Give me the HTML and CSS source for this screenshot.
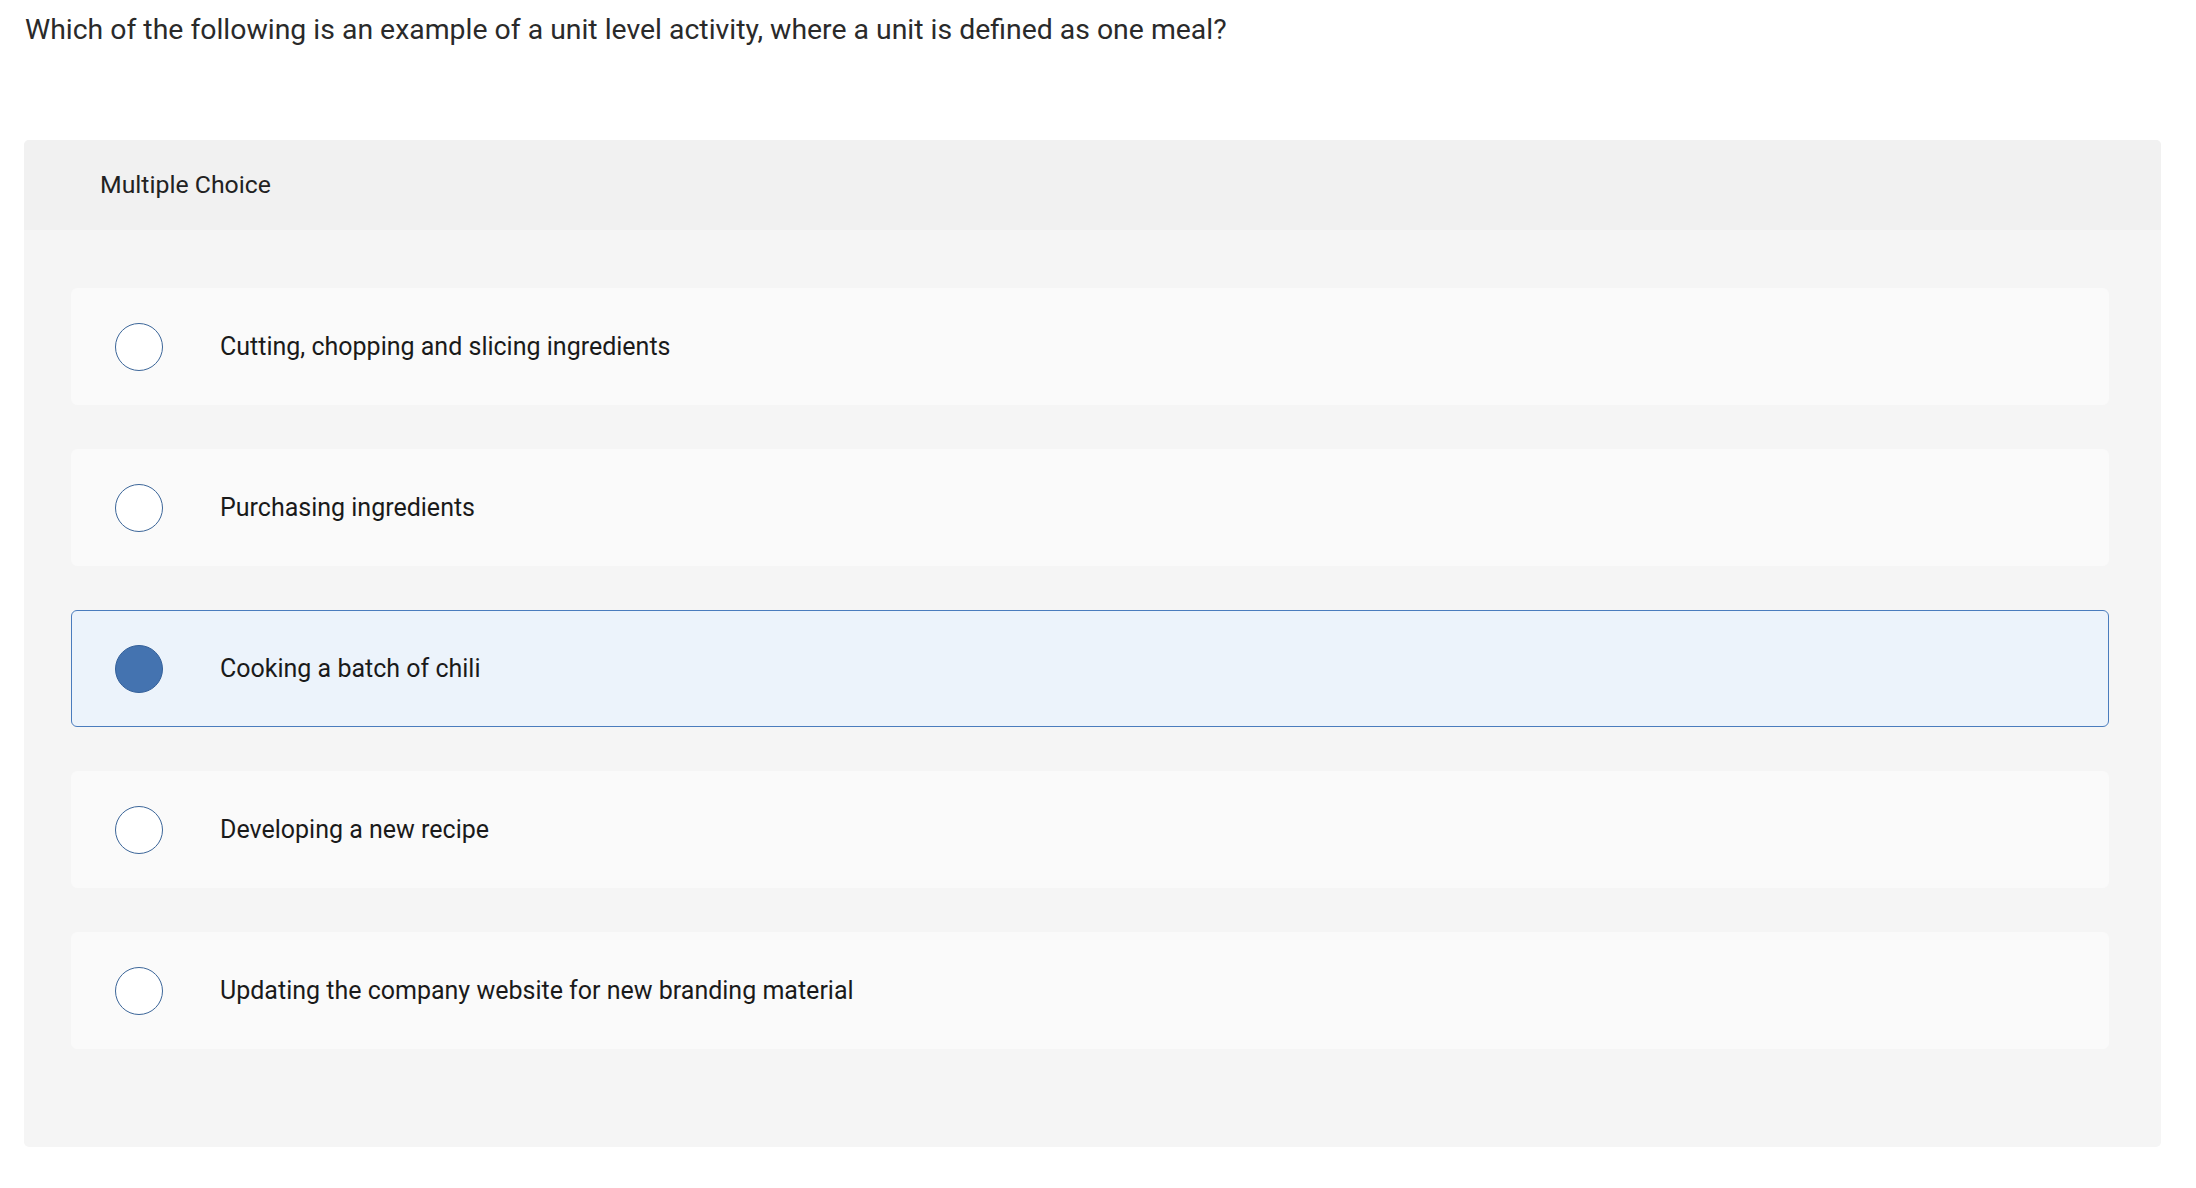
FILE: index.html
```html
<!DOCTYPE html>
<html lang="en">
<head>
<meta charset="utf-8">
<title>Multiple Choice</title>
<link rel="stylesheet" href="styles.css">
</head>
<body>
<p class="question">Which of the following is an example of a unit level activity, where a unit is defined as one meal?</p>
<section class="panel">
  <header class="panel-header">Multiple Choice</header>
  <div class="panel-body">
    <label class="option"><span class="radio"></span><span class="option-text">Cutting, chopping and slicing ingredients</span></label>
    <label class="option"><span class="radio"></span><span class="option-text">Purchasing ingredients</span></label>
    <label class="option selected"><span class="radio"></span><span class="option-text">Cooking a batch of chili</span></label>
    <label class="option"><span class="radio"></span><span class="option-text">Developing a new recipe</span></label>
    <label class="option"><span class="radio"></span><span class="option-text">Updating the company website for new branding material</span></label>
  </div>
</section>
</body>
</html>
```
FILE: styles.css
```css
html, body {
  margin: 0;
  padding: 0;
  background: #ffffff;
}
body {
  font-family: Roboto, "Liberation Sans", sans-serif;
  color: #1c1c1c;
}
.question {
  margin: 10px 0 90px 25px;
  font-size: 28.4px;
  line-height: 40px;
  color: #2a2a2a;
}
.panel {
  margin-left: 24px;
  width: 2137px;
  background: #f5f5f5;
  border-radius: 5px;
  overflow: hidden;
}
.panel-header {
  height: 90px;
  line-height: 90px;
  padding-left: 76px;
  background: #f1f1f1;
  font-size: 24.8px;
  color: #222222;
}
.panel-body {
  display: flex;
  flex-direction: column;
  gap: 44px;
  padding: 58px 52px 98px 47px;
}
.option {
  box-sizing: border-box;
  height: 117px;
  display: flex;
  align-items: center;
  padding-left: 43px;
  background: #fafafa;
  border: 1px solid #fafafa;
  border-radius: 6px;
}
.radio {
  box-sizing: border-box;
  width: 48px;
  height: 48px;
  flex: none;
  border-radius: 50%;
  background: #ffffff;
  border: 1.5px solid #3c6699;
}
.option-text {
  margin-left: 57px;
  font-size: 25px;
  color: #1a1a1a;
}
.option.selected {
  background: #ecf3fb;
  border-color: #4a7cbd;
}
.option.selected .radio {
  background: #4473b0;
  border-color: #34609a;
}
```
